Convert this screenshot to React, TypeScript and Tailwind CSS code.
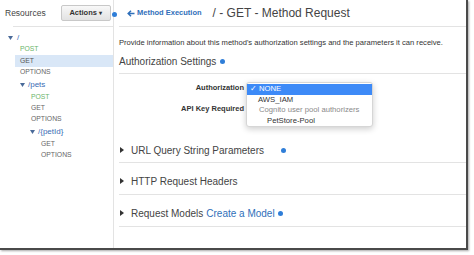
import React from "react";

function Tri({ open = true, cls = "" }: { open?: boolean; cls?: string }) {
  return open ? (
    <svg width="5" height="4" viewBox="0 0 5 4" className={cls}>
      <path d="M0 0 L5 0 L2.5 4 Z" fill="#4a6a99" />
    </svg>
  ) : (
    <svg width="4" height="6" viewBox="0 0 4 6" className={cls}>
      <path d="M0 0 L4 3 L0 6 Z" fill="#333" />
    </svg>
  );
}

function Dot({ cls = "" }: { cls?: string }) {
  return <span className={`inline-block w-[5px] h-[5px] rounded-full bg-[#2f7ed8] ${cls}`} />;
}

export default function App() {
  return (
    <div className="w-[474px] h-[255px] bg-white relative overflow-hidden font-['Liberation_Sans',Arial,sans-serif]">
      <div className="w-[468px] h-[250px] border-r-2 border-b-2 border-[#4a4a4a] shadow-[1px_1px_2px_rgba(0,0,0,0.35)] flex relative">
        {/* Sidebar */}
        <div className="w-[114px] shrink-0 border-r border-[#e3e3e3] flex flex-col">
          <div className="h-[27px] flex items-center relative">
            <span className="ml-[5px] text-[8.5px] text-[#444]">Resources</span>
            <div className="ml-[15px] h-[16px] w-[50px] mt-[-1px] rounded-[2px] border border-[#c8c8c8] bg-gradient-to-b from-[#f8f8f8] to-[#e2e2e2] flex items-center justify-center text-[7.5px] font-bold text-[#333]">
              Actions<span className="ml-[2px] text-[6px]">▾</span>
            </div>
            <div className="absolute left-[13px] right-0 bottom-0 border-b border-[#e3e3e3]" />
          </div>
          <div className="flex flex-col text-[6.8px] text-[#666] mt-[5px]">
            <div className="h-[12px] flex items-center pl-[8px]">
              <Tri />
              <span className="ml-[4px] text-[8px] text-[#3a6db5]">/</span>
            </div>
            <div className="h-[11px] flex items-center pl-[20px] text-[#6ab56a]">POST</div>
            <div className="h-[12px] flex items-center ml-[15px] pl-[5px] bg-[#d9e7f7] text-[#555]">GET</div>
            <div className="h-[11px] flex items-center pl-[20px]">OPTIONS</div>
            <div className="h-[14px] flex items-center pl-[20px]">
              <Tri />
              <span className="ml-[3px] text-[8px] text-[#3a6db5]">/pets</span>
            </div>
            <div className="h-[11px] flex items-center pl-[31px] text-[#6ab56a]">POST</div>
            <div className="h-[11px] flex items-center pl-[31px]">GET</div>
            <div className="h-[11px] flex items-center pl-[31px]">OPTIONS</div>
            <div className="h-[14px] flex items-center pl-[30px]">
              <Tri />
              <span className="ml-[3px] text-[8px] text-[#3a6db5]">/{"{petId}"}</span>
            </div>
            <div className="h-[11px] flex items-center pl-[41px]">GET</div>
            <div className="h-[11px] flex items-center pl-[41px]">OPTIONS</div>
          </div>
        </div>
        <Dot cls="absolute left-[112px] top-[12px]" />

        {/* Content */}
        <div className="flex-1 pl-[5px] flex flex-col text-[#333]">
          <div className="h-[27px] border-b border-[#e3e3e3] flex items-center">
            <div className="ml-[8px] flex items-center text-[7.5px] font-bold text-[#2f6fba]">
              <svg width="8" height="7" viewBox="0 0 8 7" className="mr-[2px]">
                <path d="M7.5 3.5 H1.5 M4 0.8 L1.2 3.5 L4 6.2" stroke="#2f6fba" strokeWidth="1.5" fill="none" />
              </svg>
              Method Execution
            </div>
            <div className="ml-[11px] text-[12px] text-[#444]">/ - GET - Method Request</div>
          </div>
          <div className="h-[47px] border-b border-[#e3e3e3] flex flex-col">
            <div className="h-[16px] mt-[8px] flex items-center text-[7.6px] text-[#333] whitespace-nowrap">
              Provide information about this method's authorization settings and the parameters it can receive.
            </div>
            <div className="h-[20px] flex items-center text-[10px] text-[#444]">
              Authorization Settings
              <Dot cls="ml-[4px]" />
            </div>
          </div>
          <div className="h-[12px] mt-[8px] flex items-center">
            <div className="w-[125px] text-right text-[7.5px] font-bold text-[#333]">Authorization</div>
          </div>
          <div className="h-[12px] mt-[9px] flex items-center">
            <div className="w-[125px] text-right text-[7.5px] font-bold text-[#333]">API Key Required</div>
          </div>
          <div className="h-[48px] border-b border-[#e3e3e3] flex items-end pb-[6px] text-[10px] text-[#444]">
            <div className="h-[12px] flex items-center">
              <Tri open={false} cls="ml-[1px] mr-[7px]" />
              URL Query String Parameters
              <Dot cls="ml-[17px]" />
            </div>
          </div>
          <div className="h-[32px] border-b border-[#e3e3e3] flex items-end pb-[7px] text-[10px] text-[#444]">
            <div className="h-[12px] flex items-center">
              <Tri open={false} cls="ml-[1px] mr-[7px]" />
              HTTP Request Headers
            </div>
          </div>
          <div className="h-[32px] border-b border-[#e3e3e3] flex items-end pb-[7px] text-[10px] text-[#444]">
            <div className="h-[12px] flex items-center">
              <Tri open={false} cls="ml-[1px] mr-[7px]" />
              Request Models
              <span className="ml-[3px] text-[#2f6fba]">Create a Model</span>
              <Dot cls="ml-[3px]" />
            </div>
          </div>
        </div>

        {/* Dropdown */}
        <div className="absolute left-[246px] top-[82px] w-[127px] h-[45px] bg-white rounded-[3px] border border-[#d6d6d6] shadow-[0_2px_6px_rgba(0,0,0,0.2)] pt-[1px] text-[7.7px] text-[#333]">
          <div className="h-[10.5px] flex items-center bg-[#3d8af7] text-white">
            <span className="ml-[3px] w-[8px]">✓</span>
            <span className="ml-[1px]">NONE</span>
          </div>
          <div className="h-[10.5px] flex items-center pl-[11px]">AWS_IAM</div>
          <div className="h-[10.5px] flex items-center pl-[12px] text-[#8a8a8a]">Cognito user pool authorizers</div>
          <div className="h-[10.5px] flex items-center pl-[20px]">PetStore-Pool</div>
        </div>
      </div>
    </div>
  );
}
